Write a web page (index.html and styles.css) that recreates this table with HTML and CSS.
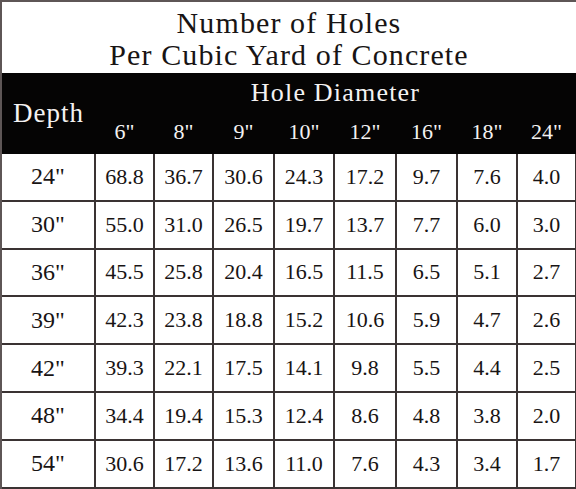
FILE: index.html
```html
<!DOCTYPE html>
<html lang="en">
<head>
    <meta charset="UTF-8">
    <meta name="viewport" content="width=device-width, initial-scale=1.0">
    <title>Number of Holes Per Cubic Yard of Concrete</title>
    <link rel="stylesheet" href="styles.css">
</head>
<body>
    <div class="sheet">
        <h1 class="title">Number of Holes<br>Per Cubic Yard of Concrete</h1>

        <table class="holes">
            <colgroup>
                <col class="col-depth">
                <col style="width: 59px;">
                <col style="width: 59px;">
                <col style="width: 61px;">
                <col style="width: 60px;">
                <col style="width: 62px;">
                <col style="width: 61px;">
                <col style="width: 60px;">
                <col style="width: 59px;">
            </colgroup>
            <thead>
                <tr class="head-top">
                    <th class="depth-head" rowspan="2">Depth</th>
                    <th class="diameter-head" colspan="8">Hole Diameter</th>
                </tr>
                <tr class="head-sizes">
                    <th>6"</th><th>8"</th><th>9"</th><th>10"</th><th>12"</th><th>16"</th><th>18"</th><th>24"</th>
                </tr>
            </thead>
            <tbody>
                <tr><td class="depth">24"</td><td>68.8</td><td>36.7</td><td>30.6</td><td>24.3</td><td>17.2</td><td>9.7</td><td>7.6</td><td>4.0</td></tr>
                <tr><td class="depth">30"</td><td>55.0</td><td>31.0</td><td>26.5</td><td>19.7</td><td>13.7</td><td>7.7</td><td>6.0</td><td>3.0</td></tr>
                <tr><td class="depth">36"</td><td>45.5</td><td>25.8</td><td>20.4</td><td>16.5</td><td>11.5</td><td>6.5</td><td>5.1</td><td>2.7</td></tr>
                <tr><td class="depth">39"</td><td>42.3</td><td>23.8</td><td>18.8</td><td>15.2</td><td>10.6</td><td>5.9</td><td>4.7</td><td>2.6</td></tr>
                <tr><td class="depth">42"</td><td>39.3</td><td>22.1</td><td>17.5</td><td>14.1</td><td>9.8</td><td>5.5</td><td>4.4</td><td>2.5</td></tr>
                <tr><td class="depth">48"</td><td>34.4</td><td>19.4</td><td>15.3</td><td>12.4</td><td>8.6</td><td>4.8</td><td>3.8</td><td>2.0</td></tr>
                <tr><td class="depth">54"</td><td>30.6</td><td>17.2</td><td>13.6</td><td>11.0</td><td>7.6</td><td>4.3</td><td>3.4</td><td>1.7</td></tr>
            </tbody>
        </table>
        <div class="edge"></div>
    </div>
</body>
</html>
```

FILE: styles.css
```css
body {
    margin: 0;
    background: #fff;
    font-family: "Liberation Serif", "Times New Roman", serif;
    color: #181414;
}
.sheet {
    width: 574px;
    border-top: 2px solid #5e5656;
    border-left: 2px solid #5e5656;
}
.title {
    margin: 0;
    height: 66px;
    padding-top: 5px;
    font-size: 30px;
    font-weight: normal;
    line-height: 32px;
    letter-spacing: 1.1px;
    text-align: center;
}
.holes {
    width: 574px;
    table-layout: fixed;
    border-collapse: collapse;
}
.col-depth {
    width: 93px;
}
thead {
    background: #050404;
    color: #f4f2f2;
}
th {
    font-weight: normal;
    padding: 0;
}
.head-top {
    height: 40px;
}
.head-sizes {
    height: 41px;
}
.depth-head {
    font-size: 27px;
    letter-spacing: 1px;
    vertical-align: middle;
}
.diameter-head {
    font-size: 26px;
    letter-spacing: 1.2px;
    vertical-align: bottom;
    padding-bottom: 5px;
}
.head-sizes th {
    font-size: 22px;
    vertical-align: top;
    padding-top: 6px;
}
td {
    height: 45.8px;
    padding: 0;
    border: 2px solid #3a3333;
    text-align: center;
    font-size: 22px;
}
td.depth {
    font-size: 24px;
}
tbody tr:first-child td {
    border-top: none;
}
td:first-child {
    border-left: none;
}
.edge {
    width: 280px;
    height: 2px;
    margin-left: 22px;
    background: #7c2620;
}
```
